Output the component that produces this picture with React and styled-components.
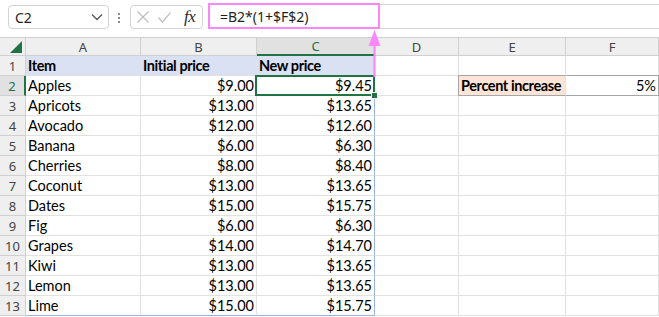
import React from 'react'
import styled, { createGlobalStyle } from 'styled-components'

const GlobalStyle = createGlobalStyle`
  body {
    margin: 0;
    background: #ffffff;
    font-family: Lato, "Liberation Sans", sans-serif;
  }
`

const GREEN = '#217346'
const PINK = '#fb86f8'
const GRID = '#e1e1e1'
const HEAD_LINE = '#d0d0d0'
const TABLE_BLUE = '#9bb3df'

const Window = styled.div`
  position: relative;
  width: 659px;
  height: 317px;
  overflow: hidden;
  background: #ffffff;
`

const Toolbar = styled.div`
  display: flex;
  align-items: flex-start;
  height: 37px;
  padding: 5px 0 0 8px;
  box-sizing: border-box;
`

const NameBox = styled.div`
  width: 101px;
  height: 24px;
  box-sizing: border-box;
  border: 1px solid #d3d3d3;
  border-radius: 4px;
  display: flex;
  align-items: center;
  justify-content: space-between;
  padding: 0 5px 0 6px;
  font: 14px "Noto Sans", sans-serif;
  color: #1f1f1f;
`

const Grip = styled.div`
  display: flex;
  flex-direction: column;
  gap: 2px;
  margin: 8px 10px 0 9px;
  span {
    width: 2px;
    height: 2px;
    background: #8a8a8a;
  }
`

const FxBox = styled.div`
  width: 73px;
  height: 24px;
  box-sizing: border-box;
  border: 1px solid #d3d3d3;
  border-radius: 4px;
  display: flex;
  align-items: center;
  padding-left: 6px;
`

const ToolIcon = styled.svg`
  flex: none;
  margin-left: ${p => p.$gap || 0}px;
`

const FxLabel = styled.span`
  margin-left: 13px;
  font: italic 17px "Liberation Serif", serif;
  color: #2b2b2b;
  letter-spacing: -0.5px;
  line-height: 1;
  padding-bottom: 2px;
`

const FormulaBar = styled.div`
  flex: 1;
  height: 25px;
  margin: -1px 0 0 5px;
  box-sizing: border-box;
  border-top: 1px solid #d6d6d6;
  border-bottom: 1px solid #d6d6d6;
  display: flex;
  align-items: center;
  padding-left: 12px;
  font: 14px "Noto Sans", sans-serif;
  color: #1f1f1f;
`

const Callout = styled.div`
  position: absolute;
  left: 208px;
  top: 3px;
  width: 172px;
  height: 26px;
  box-sizing: border-box;
  border: 2px solid ${PINK};
  pointer-events: none;
`

const Pointer = styled.svg`
  position: absolute;
  left: 368px;
  top: 30px;
`

const Sheet = styled.div`
  display: grid;
  grid-template-columns: 26px 115px 116px 118px 84px 107px 93px;
  grid-template-rows: 19px repeat(13, 20px);
`

const ColHead = styled.div`
  box-sizing: border-box;
  background: ${p => (p.$active ? '#e1e1e1' : '#efefef')};
  color: ${p => (p.$active ? GREEN : '#444444')};
  border-top: 1px solid ${HEAD_LINE};
  border-right: 1px solid ${HEAD_LINE};
  border-bottom: ${p => (p.$active ? `2px solid ${GREEN}` : `1px solid ${HEAD_LINE}`)};
  display: flex;
  align-items: center;
  justify-content: center;
  font: 13px "Noto Sans", sans-serif;
  position: relative;
`

const Corner = styled(ColHead)`
  justify-content: flex-end;
  align-items: flex-end;
  padding: 0 3px 2px 0;
`

const RowHead = styled.div`
  box-sizing: border-box;
  background: ${p => (p.$active ? '#e1e1e1' : '#efefef')};
  color: ${p => (p.$active ? GREEN : '#444444')};
  border-right: ${p => (p.$active ? `2px solid ${GREEN}` : `1px solid ${HEAD_LINE}`)};
  border-bottom: 1px solid ${HEAD_LINE};
  display: flex;
  align-items: center;
  justify-content: center;
  font: 13px "Noto Sans", sans-serif;
`

const Cell = styled.div`
  position: relative;
  box-sizing: border-box;
  background: ${p => p.$fill || '#ffffff'};
  border-right: 1px solid ${p => p.$rightLine || GRID};
  border-bottom: 1px solid ${p => p.$bottomLine || GRID};
  border-top: ${p => (p.$topLine ? `1px solid ${p.$topLine}` : 'none')};
  border-left: ${p => (p.$leftLine ? `1px solid ${p.$leftLine}` : 'none')};
  margin-top: ${p => (p.$topLine ? '-1px' : '0')};
  margin-left: ${p => (p.$leftLine ? '-1px' : '0')};
  padding: 0 2px;
  display: flex;
  align-items: flex-end;
  justify-content: ${p => (p.$right ? 'flex-end' : 'flex-start')};
  font-size: 14.5px;
  line-height: 19px;
  font-weight: ${p => (p.$bold ? 700 : 400)};
  letter-spacing: ${p => (p.$bold ? '-0.4px' : '0')};
  color: #000000;
  white-space: nowrap;

  ${p =>
    p.$selected &&
    `
    &::after {
      content: '';
      position: absolute;
      left: -2px;
      top: -1px;
      right: -1px;
      bottom: -1px;
      border: 2px solid ${GREEN};
      pointer-events: none;
    }
    &::before {
      content: '';
      position: absolute;
      right: -4px;
      bottom: -4px;
      width: 5px;
      height: 5px;
      background: ${GREEN};
      border: 1px solid #ffffff;
      z-index: 2;
    }
  `}
`

const fruits = [
  ['Apples', 9.0, 9.45],
  ['Apricots', 13.0, 13.65],
  ['Avocado', 12.0, 12.6],
  ['Banana', 6.0, 6.3],
  ['Cherries', 8.0, 8.4],
  ['Coconut', 13.0, 13.65],
  ['Dates', 15.0, 15.75],
  ['Fig', 6.0, 6.3],
  ['Grapes', 14.0, 14.7],
  ['Kiwi', 13.0, 13.65],
  ['Lemon', 13.0, 13.65],
  ['Lime', 15.0, 15.75],
]

const money = v => '$' + v.toFixed(2)
const HEADER_FILL = '#d9e1f2'

function App() {
  const lastRow = fruits.length + 1
  return (
    <Window>
      <GlobalStyle />
      <Toolbar>
        <NameBox>
          <span>C2</span>
          <svg width="12" height="8" viewBox="0 0 12 8">
            <polyline points="1,1.5 6,6.5 11,1.5" fill="none" stroke="#555" strokeWidth="1.3" />
          </svg>
        </NameBox>
        <Grip>
          <span />
          <span />
          <span />
        </Grip>
        <FxBox>
          <ToolIcon width="12" height="12" viewBox="0 0 12 12">
            <path d="M0.5 0.5 L11.5 11.5 M11.5 0.5 L0.5 11.5" stroke="#bdbdbd" strokeWidth="1.2" fill="none" />
          </ToolIcon>
          <ToolIcon $gap={9} width="13" height="11" viewBox="0 0 13 11">
            <polyline points="0.5,5.5 4.5,10 12.5,0.7" stroke="#bdbdbd" strokeWidth="1.2" fill="none" />
          </ToolIcon>
          <FxLabel>fx</FxLabel>
        </FxBox>
        <FormulaBar>=B2*(1+$F$2)</FormulaBar>
      </Toolbar>

      <Sheet>
        <Corner>
          <svg width="12" height="12" viewBox="0 0 12 12">
            <polygon points="12,0 12,12 0,12" fill={GREEN} />
          </svg>
        </Corner>
        {['A', 'B', 'C', 'D', 'E', 'F'].map(c => (
          <ColHead key={c} $active={c === 'C'}>{c}</ColHead>
        ))}

        <RowHead>1</RowHead>
        <Cell $fill={HEADER_FILL} $rightLine={HEADER_FILL} $bold>Item</Cell>
        <Cell $fill={HEADER_FILL} $rightLine={HEADER_FILL} $bold>Initial price</Cell>
        <Cell $fill={HEADER_FILL} $rightLine={TABLE_BLUE} $bold>New price</Cell>
        <Cell />
        <Cell />
        <Cell />

        {fruits.map(([name, price, next], i) => {
          const row = i + 2
          const last = row === lastRow
          const bottom = last ? TABLE_BLUE : undefined
          return (
            <React.Fragment key={name}>
              <RowHead $active={row === 2}>{row}</RowHead>
              <Cell $bottomLine={bottom}>{name}</Cell>
              <Cell $bottomLine={bottom} $right>{money(price)}</Cell>
              <Cell $bottomLine={bottom} $rightLine={TABLE_BLUE} $right $selected={row === 2}>
                {money(next)}
              </Cell>
              <Cell />
              {row === 2 ? (
                <>
                  <Cell $fill="#fce4d6" $bold $topLine="#a6a6a6" $leftLine="#a6a6a6" $bottomLine="#a6a6a6">
                    Percent increase
                  </Cell>
                  <Cell $right $topLine="#a6a6a6" $rightLine="#a6a6a6" $bottomLine="#a6a6a6">
                    5%
                  </Cell>
                </>
              ) : (
                <>
                  <Cell />
                  <Cell />
                </>
              )}
            </React.Fragment>
          )
        })}
      </Sheet>

      <Callout />
      <Pointer width="13" height="47" viewBox="0 0 13 47">
        <polygon points="6.5,0 12.5,16 0.5,16" fill={PINK} />
        <rect x="5.5" y="12" width="2" height="35" fill={PINK} />
      </Pointer>
    </Window>
  )
}

export default App
